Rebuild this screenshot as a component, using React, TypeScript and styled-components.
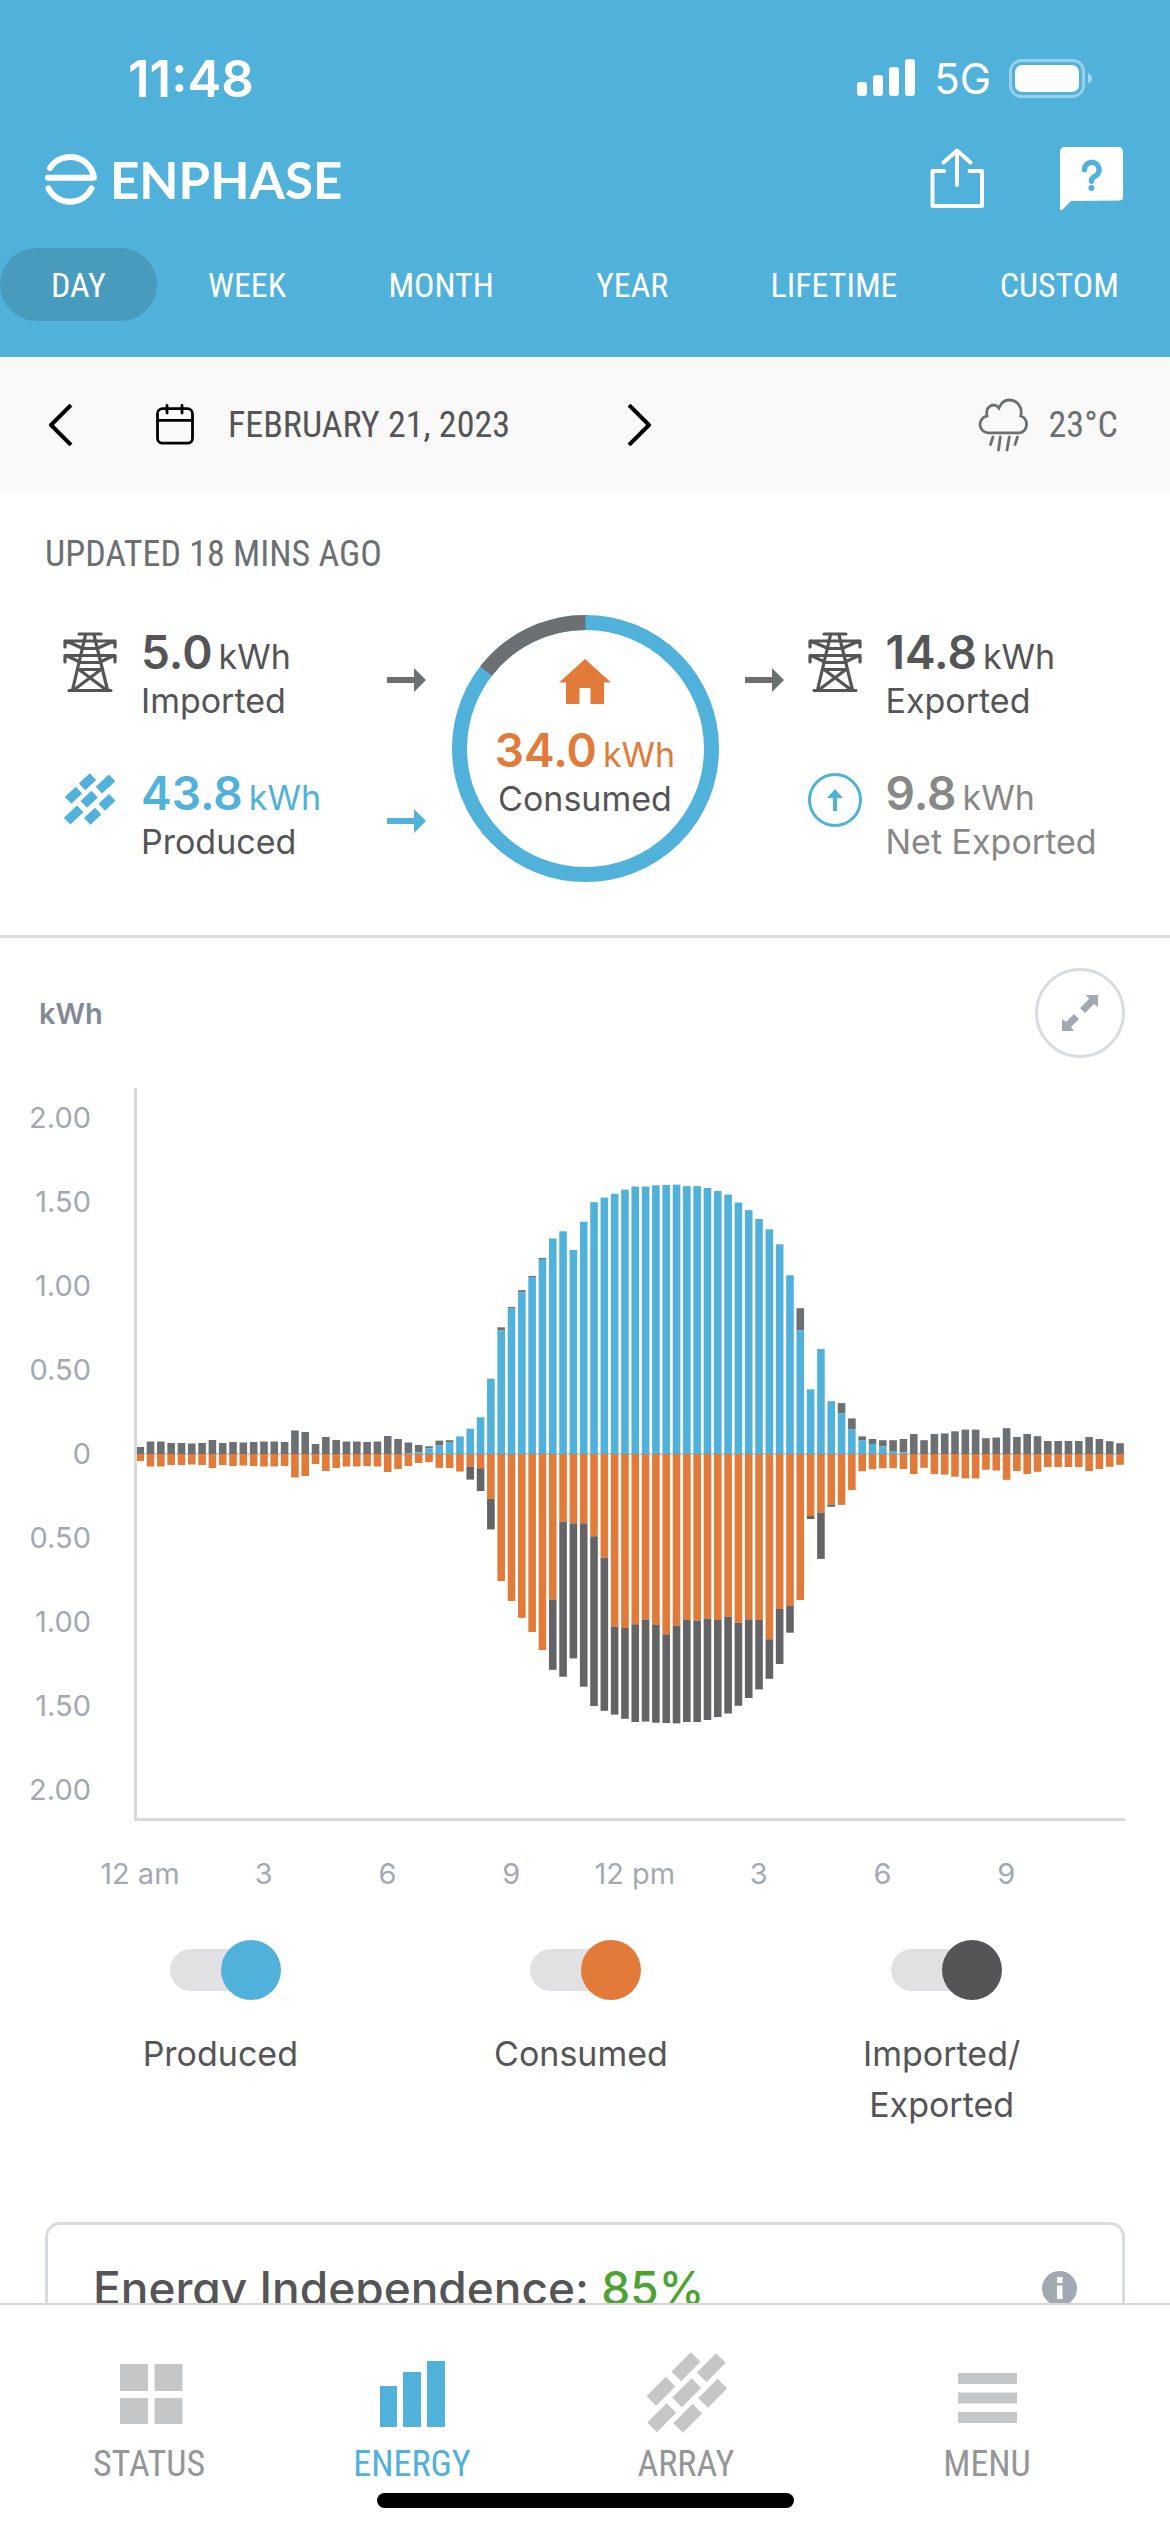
import React, { useState } from "react";
import styled, { createGlobalStyle } from "styled-components";

const color = {
  blue: "#50b1da",
  orange: "#e27a39",
  slate: "#6c7073",
  charcoal: "#555557",
  exported: "#646466",
  muted: "#888888",
  axis: "#a2a9b3",
  line: "#d8dce0",
  green: "#4fa335",
};

const sans = `Inter, "Liberation Sans", sans-serif`;
const narrow = `"Roboto Condensed", "Liberation Sans Narrow", Roboto, sans-serif`;

const GlobalStyle = createGlobalStyle`
  * { box-sizing: border-box; }
  body { margin: 0; background: #fff; font-family: ${sans}; }
  button { border: 0; padding: 0; background: none; font: inherit; color: inherit; cursor: pointer; }
  svg { display: block; flex: none; }
`;

const Screen = styled.div`
  display: flex;
  flex-direction: column;
  height: 100vh;
  color: ${color.charcoal};
`;

/* ---------- header ---------- */

const Header = styled.header`
  background: ${color.blue};
  color: #fff;
  padding-bottom: 36px;
`;

const StatusBar = styled.div`
  display: flex;
  align-items: center;
  justify-content: space-between;
  height: 132px;
  padding: 24px 78px 0 128px;
`;

const Clock = styled.time`
  font-size: 51px;
  font-weight: 600;
`;

const StatusIcons = styled.div`
  display: flex;
  align-items: center;
  gap: 18px;
  font-size: 42px;
`;

const BrandBar = styled.div`
  display: flex;
  align-items: center;
  justify-content: space-between;
  height: 94px;
  padding: 0 46px 0 45px;
`;

const Brand = styled.div`
  display: flex;
  align-items: center;
  gap: 13px;
  font-family: Lato, sans-serif;
  font-size: 51px;
  font-weight: 700;
`;

const BrandActions = styled.div`
  display: flex;
  align-items: center;
  gap: 74px;
`;

const Tabs = styled.nav`
  display: flex;
  justify-content: space-between;
  margin-top: 22px;
`;

const Tab = styled.button<{ $active: boolean }>`
  height: 73px;
  padding: 0 51px;
  border-radius: 37px;
  background: ${(p) => (p.$active ? "#489bbc" : "transparent")};
  font-family: ${narrow};
  font-size: 34px;
`;

/* ---------- date bar ---------- */

const DateBar = styled.div`
  display: flex;
  align-items: center;
  justify-content: space-between;
  height: 135px;
  padding: 0 52px 0 48px;
  background: #f9f9f9;
  font-family: ${narrow};
  font-size: 36px;
`;

const DateControls = styled.div`
  display: flex;
  align-items: center;
  gap: 83px;
`;

const DateButton = styled.button`
  display: flex;
  align-items: center;
  gap: 34px;
  min-width: 388px;
`;

const Weather = styled.div`
  display: flex;
  align-items: center;
  gap: 18px;
  color: ${color.slate};
`;

/* ---------- content ---------- */

const Content = styled.main`
  flex: 1;
  min-height: 0;
  overflow-y: auto;
  scrollbar-width: none;
`;

const Summary = styled.section`
  padding: 42px 45px 53px;
  border-bottom: 3px solid ${color.line};
`;

const Updated = styled.p`
  margin: 0;
  font-family: ${narrow};
  font-size: 36px;
  line-height: 40px;
  color: ${color.slate};
`;

const Flow = styled.div`
  display: grid;
  grid-template-columns: 1fr 267px 1fr;
  gap: 26px;
  margin-top: 41px;
`;

const FlowColumn = styled.div`
  display: flex;
  flex-direction: column;
  gap: 43px;
  padding-top: 12px;
`;

const FlowItem = styled.div<{ $indent?: boolean }>`
  display: flex;
  gap: 24px;
  padding-left: ${(p) => (p.$indent ? "18px" : "0")};
`;

const FlowIcon = styled.div`
  width: 54px;
  padding-top: 5px;
`;

const ArrowSlot = styled.div`
  display: flex;
  align-items: center;
  width: 39px;
  padding-top: 8px;
`;

const InArrow = styled(ArrowSlot)`
  margin-left: auto;
`;

const Value = styled.div<{ $color: string }>`
  height: 50px;
  font-size: 34px;
  line-height: 50px;
  white-space: nowrap;
  color: ${(p) => p.$color};

  strong {
    margin-right: 6px;
    font-size: 46px;
    font-weight: 600;
  }
`;

const Label = styled.div<{ $color?: string }>`
  font-size: 34px;
  line-height: 48px;
  white-space: nowrap;
  color: ${(p) => p.$color ?? color.charcoal};
`;

const Ring = styled.div`
  position: relative;
  height: 267px;
`;

const RingContent = styled.div`
  position: absolute;
  inset: 0;
  display: flex;
  flex-direction: column;
  align-items: center;
  padding-top: 44px;

  svg { margin-bottom: 21px; }
`;

const ChartHead = styled.div`
  display: flex;
  align-items: center;
  justify-content: space-between;
  padding: 30px 45px 0 39px;
  font-size: 29px;
  font-weight: 600;
  color: #818a96;
`;

const ExpandButton = styled.button`
  display: grid;
  place-items: center;
  width: 90px;
  height: 90px;
  border: 3px solid ${color.line};
  border-radius: 50%;
`;

const ChartRow = styled.div`
  display: flex;
  gap: 43px;
  margin-top: 18px;
  padding-right: 45px;
`;

const YAxis = styled.div`
  width: 91px;
  font-size: 29px;
  line-height: 84px;
  text-align: right;
  color: ${color.axis};
`;

const Plot = styled.div`
  flex: 1;
  padding-top: 12px;

  svg { width: 100%; height: 733px; }
`;

const XAxis = styled.div`
  display: flex;
  margin-top: 22px;
  padding: 0 102px 0 78px;
  font-size: 29px;
  line-height: 40px;
  text-align: center;
  color: ${color.axis};

  span { flex: 1; }
`;

const Legend = styled.div`
  display: grid;
  grid-template-columns: repeat(3, 1fr);
  margin-top: 46px;
  padding: 0 43px 0 45px;
`;

const LegendItem = styled.label`
  display: flex;
  flex-direction: column;
  align-items: center;
  gap: 28px;
  font-size: 34px;
  line-height: 51px;
  text-align: center;

  span { padding-right: 10px; white-space: pre-line; }
`;

const Switch = styled.input<{ $color: string }>`
  appearance: none;
  position: relative;
  width: 105px;
  height: 42px;
  margin: 9px 6px 9px 0;
  border-radius: 21px;
  background: #e1e1e3;

  &::after {
    content: "";
    position: absolute;
    top: -9px;
    left: -6px;
    width: 60px;
    height: 60px;
    border-radius: 50%;
    background: #b5b5b8;
  }

  &:checked::after {
    left: 51px;
    background: ${(p) => p.$color};
  }
`;

const Card = styled.section`
  display: flex;
  align-items: center;
  justify-content: space-between;
  margin: 92px 45px 60px;
  padding: 33px 45px 60px 45px;
  border: 3px solid ${color.line};
  border-radius: 15px;
`;

const CardTitle = styled.h2`
  margin: 0;
  font-size: 46px;
  font-weight: 500;
  line-height: 60px;

  span { color: ${color.green}; }
`;

/* ---------- bottom navigation ---------- */

const BottomNav = styled.nav`
  display: grid;
  grid-template-columns: 298fr 228fr 320fr 282fr;
  padding: 47px 42px 0 0;
  border-top: 2px solid #d6d6d7;
  background: #fff;
`;

const NavButton = styled.button<{ $active: boolean }>`
  display: flex;
  flex-direction: column;
  align-items: center;
  gap: 11px;
  font-family: ${narrow};
  font-size: 36px;
  line-height: 40px;
  color: ${(p) => (p.$active ? color.blue : "#949698")};

  svg { color: ${(p) => (p.$active ? color.blue : "#c5c6c8")}; }
`;

const HomeIndicator = styled.div`
  width: 417px;
  height: 15px;
  margin: 9px auto 24px;
  border-radius: 8px;
  background: #000;
`;

/* ---------- icons ---------- */

const Signal = () => (
  <svg width="59" height="38" fill="#fff">
    <rect x="0" y="23" width="10" height="14" rx="3" />
    <rect x="16" y="16" width="10" height="21" rx="3" />
    <rect x="32" y="8" width="10" height="29" rx="3" />
    <rect x="48" y="0" width="10" height="37" rx="3" />
  </svg>
);

const Battery = () => (
  <svg width="83" height="39">
    <rect x="1.5" y="1.5" width="73" height="36" rx="11" fill="none" stroke="#fff" strokeOpacity=".4" strokeWidth="3" />
    <rect x="6" y="6" width="64" height="27" rx="7" fill="#fff" />
    <path d="M79 14q4 2 4 5.500t-4 5.500z" fill="#fff" fillOpacity=".45" />
  </svg>
);

const Logo = () => (
  <svg width="52" height="54" viewBox="0 0 52 54" fill="none" stroke="#fff" strokeWidth="6" strokeLinecap="round" strokeLinejoin="round">
    <path d="M5 16A24 24 0 0 1 49 25.700H3" />
    <path d="M3.500 36.500A24 24 0 0 0 46.500 36.500" />
  </svg>
);

const ShareIcon = () => (
  <svg width="57" height="63" viewBox="0 0 57 63" fill="none" stroke="#fff" strokeWidth="4" strokeLinecap="round" strokeLinejoin="round">
    <path d="M15 23H3.500V58H53V23H40.500" />
    <path d="M28 3V37M14.500 14.500 28 2.500 41.500 14.500" />
  </svg>
);

const HelpIcon = () => (
  <svg width="64" height="64" viewBox="0 0 64 64">
    <path d="M5 0H58Q63 0 63 5V50Q63 53.500 59 53.500L11 54 1.500 63.500 0 63V5Q0 0 5 0Z" fill="#fff" />
    <path d="M24.500 22.800A7.300 7.300 0 1 1 35.500 29C32.500 30.500 31.500 31.500 31.500 34.300" fill="none" stroke={color.blue} strokeWidth="5.500" strokeLinecap="round" />
    <circle cx="31.400" cy="41" r="3" fill={color.blue} />
  </svg>
);

const Chevron = ({ right = false }: { right?: boolean }) => (
  <svg width="25" height="42" viewBox="0 0 25 42" fill="none" stroke="#000" strokeWidth="4" strokeLinejoin="round">
    <path d={right ? "M2 1 22 21 2 41" : "M23 1 3 21 23 41"} />
  </svg>
);

const CalendarIcon = () => (
  <svg width="38" height="41" viewBox="0 0 38 41" fill="none" stroke="#000" strokeWidth="2.800" strokeLinecap="round">
    <rect x="1.500" y="4.700" width="35" height="34.500" rx="5" />
    <path d="M2 16.300H36M11 1.500V9M26 1.500V9" />
  </svg>
);

const RainIcon = () => (
  <svg width="54" height="54" viewBox="0 0 54 54" fill="none" stroke="currentColor" strokeWidth="2.800" strokeLinecap="round">
    <path d="M10.500 34.800H43A8.800 8.800 0 0 0 43.700 18C46 9 40 2 32 2 27 2 24 5 22 10 17 4 8 8 10 18A8.500 8.500 0 0 0 10.500 34.800Z" />
    <path d="M16 39 13.500 46.500M23.300 39 21.500 52M32.300 39 30 52M40.500 39 38 46.500" />
  </svg>
);

const TowerIcon = () => (
  <svg width="54" height="61" viewBox="0 0 54 61" fill="none" stroke={color.charcoal} strokeWidth="3.200" strokeLinecap="round" strokeLinejoin="round">
    <path d="M16 2H38M22.500 3 9.500 58M31 3 44.500 58M6 58.500H48" />
    <path d="M2 15V9H52V15M3 9 20 16.500H34L51 9" />
    <path d="M2 30V23.500H52V30M3 23.500 18 30.500H36L51 23.500" />
    <path d="M16 37.500H38L12 57M16 37.500 42 57" />
  </svg>
);

type Panel = [cx: number, cy: number, length: number];

const Panels = ({ size, thickness, angle, items, fill }: { size: number; thickness: number; angle: number; items: Panel[]; fill: string }) => (
  <svg width={size} height={size} viewBox={`0 0 ${size} ${size}`} fill={fill}>
    {items.map(([cx, cy, length]) => (
      <rect
        key={`${cx}-${cy}`}
        x={cx - length / 2}
        y={cy - thickness / 2}
        width={length}
        height={thickness}
        transform={`rotate(${angle} ${cx} ${cy})`}
      />
    ))}
  </svg>
);

const PanelsIcon = () => (
  <Panels
    size={54}
    thickness={9.4}
    angle={-43}
    fill={color.blue}
    items={[[24.5, 8.7, 15], [42.5, 11, 18], [10.5, 22.3, 15], [26.2, 26.3, 15], [44, 29.3, 14.5], [10.7, 42, 18], [29.7, 43.3, 15]]}
  />
);

const ArrayIcon = () => (
  <Panels
    size={81}
    thickness={13.6}
    angle={-45}
    fill="currentColor"
    items={[[40, 14.7, 27.3], [65.3, 15.7, 27.3], [15, 39.3, 27.3], [40.7, 40.7, 27.3], [66.7, 41.3, 27.3], [15.7, 65.7, 27.3], [41.7, 66.3, 27.3]]}
  />
);

const Arrow = ({ fill = color.slate }: { fill?: string }) => (
  <svg width="39" height="24" viewBox="0 0 39 24" fill={fill}>
    <path d="M0 9H27V0L39 12 27 24V15H0Z" />
  </svg>
);

const NetIcon = () => (
  <svg width="54" height="54" viewBox="0 0 54 54">
    <circle cx="27" cy="27" r="25.500" fill="none" stroke={color.blue} strokeWidth="3" />
    <path d="M27 16 35 25H29V38H25V25H19Z" fill={color.blue} />
  </svg>
);

const HouseIcon = () => (
  <svg width="52" height="45" viewBox="0 0 52 45" fill={color.orange}>
    <path d="M26 0 52 23.500H45V45H31.500V29H20.500V45H7V23.500H0Z" />
  </svg>
);

const RING_RADIUS = 126;
const IMPORTED_SHARE = 0.145;

const RingChart = () => {
  const length = 2 * Math.PI * RING_RADIUS;
  return (
    <svg width="267" height="267" viewBox="0 0 267 267" fill="none" strokeWidth="15">
      <circle cx="133.500" cy="133.500" r={RING_RADIUS} stroke={color.blue} />
      <circle
        cx="133.500"
        cy="133.500"
        r={RING_RADIUS}
        stroke={color.slate}
        strokeDasharray={`${length * IMPORTED_SHARE} ${length}`}
        strokeDashoffset={length * IMPORTED_SHARE - length}
        transform="rotate(-90 133.5 133.5)"
      />
    </svg>
  );
};

const ExpandIcon = () => (
  <svg width="38" height="38" viewBox="0 0 38 38" fill={color.axis}>
    <path d="M25 1H37V13L33 10 24 19 19 14 28 5Z" />
    <path d="M13 37H1V25L5 28 13 20 18 25 10 33Z" />
  </svg>
);

const InfoIcon = () => (
  <svg width="35" height="35" viewBox="0 0 35 35">
    <circle cx="17.500" cy="17.500" r="17.500" fill={color.axis} />
    <path d="M15 6H20.500V12H15ZM15 14.500H20.500V28H15Z" fill="#fff" />
  </svg>
);

const StatusIcon = () => (
  <svg width="81" height="81" fill="currentColor">
    <path d="M11 12h28v27H11zM45.500 12h28v27h-28zM11 46h28v26H11zM45.500 46h28v26h-28z" />
  </svg>
);

const EnergyIcon = () => (
  <svg width="81" height="81" fill="currentColor">
    <path d="M8 34h17v41H8zM31 20h18v55H31zM55 9h18v66H55z" />
  </svg>
);

const MenuIcon = () => (
  <svg width="81" height="81" fill="currentColor">
    <path d="M11 21h59v11H11zM11 40.500h59v11H11zM11 60h59v11H11z" />
  </svg>
);

/* ---------- energy data ---------- */

/*
 * One tuple per 15 minutes, in units of 1/168 kWh:
 * [produced, produced + imported, consumed, consumed + exported]
 */
type Reading = [number, number, number, number];

const idle = (values: number[]): Reading[] => values.map((v) => [0, v, v, v]);

const readings: Reading[] = [
  ...idle([7, 12.5, 12.5, 11, 11, 10.5, 11, 14, 11, 12, 11.5, 12, 12.5, 12.5, 12, 23.5, 22, 10, 17, 14, 12.5, 12.5, 12, 12.5, 18, 15]),
  [1, 11.5, 12, 12], [1.5, 9, 9, 9], [5.7, 7.7, 8, 8], [8.4, 13.4, 13.8, 13.8], [11.9, 13.8, 14, 14],
  [17.6, 17.6, 17.6, 17.6], [25.3, 25.3, 12.6, 25.6], [36.7, 36.7, 14.2, 37], [75.4, 75.4, 44.8, 75.4],
  [123.6, 126.7, 127, 127], [145.8, 147, 147, 147], [161.5, 163.8, 163.8, 163.8], [177, 178, 178, 178],
  [195, 196, 196, 196], [215.5, 215.5, 145.8, 215.8], [222.7, 222.7, 67.7, 222.7], [204, 204, 69.3, 204.4],
  [232.3, 232.3, 69.3, 232.7], [251.8, 251.8, 82.3, 252], [256.4, 256.4, 103.7, 256.8], [260.2, 260.2, 172.6, 260.6],
  [264.4, 264.4, 174, 264.8], [267.5, 267.5, 170.3, 268], [267.5, 267.5, 165.7, 267.5], [268.7, 268.7, 171, 268.7],
  [269, 269, 180.3, 269], [269.4, 269.4, 171.8, 269.4], [267.9, 267.9, 166, 268], [267.9, 267.9, 166.5, 268],
  [266, 266, 164.6, 266], [263, 263, 166, 263], [259.5, 259.5, 162.7, 259.5], [251.4, 251.4, 168.8, 251.8],
  [243.8, 243.8, 165.3, 244], [235, 235, 166, 235.4], [224.6, 224.6, 185.2, 224.8], [209.7, 209.7, 155, 210],
  [178.7, 178.7, 152, 178.7], [123.6, 145.8, 146, 146], [64.7, 64.7, 62, 65], [104.9, 104.9, 58.6, 104.9],
  [52.8, 52.8, 50.5, 52.8], [40.6, 50.9, 50.9, 50.9], [24.5, 35.6, 36, 36], [13.8, 17.6, 17.2, 17.2],
  [10, 15, 15.3, 15.3], [7.7, 13.8, 14.2, 14.2], [2.3, 13.8, 14.2, 14.2], [1.5, 15, 15, 15],
  ...idle([20, 13.8, 20, 20.6, 22.7, 24.4, 24.4, 15.8, 16.5, 25.8, 17, 20, 17.8, 13, 13, 13, 13, 17, 15, 12.8, 10.8]),
];

const ZERO_Y = 366;
const PITCH = 10.314;
const BAR_WIDTH = 7.6;

type Visible = { produced: boolean; consumed: boolean; grid: boolean };

const EnergyChart = ({ visible }: { visible: Visible }) => (
  <svg viewBox="0 0 991 733" preserveAspectRatio="none" role="img" aria-label="Energy by quarter hour">
    <path d={`M0 ${ZERO_Y}H991`} stroke="#cfd3d7" strokeWidth="2" />
    {readings.map(([produced, up, consumed, down], i) => {
      const x = 6.2 + i * PITCH - BAR_WIDTH / 2;
      return (
        <g key={i}>
          {visible.grid && <rect x={x} y={ZERO_Y - up} width={BAR_WIDTH} height={up - produced} fill={color.slate} />}
          {visible.produced && <rect x={x} y={ZERO_Y - produced} width={BAR_WIDTH} height={produced} fill={color.blue} />}
          {visible.consumed && <rect x={x} y={ZERO_Y} width={BAR_WIDTH} height={consumed} fill={color.orange} />}
          {visible.grid && <rect x={x} y={ZERO_Y + consumed} width={BAR_WIDTH} height={down - consumed} fill={color.exported} />}
        </g>
      );
    })}
    <path d="M1.500 0V731.500H991" fill="none" stroke="#d6d9dc" strokeWidth="3" />
  </svg>
);

const TABS = ["DAY", "WEEK", "MONTH", "YEAR", "LIFETIME", "CUSTOM"];
const Y_LABELS = ["2.00", "1.50", "1.00", "0.50", "0", "0.50", "1.00", "1.50", "2.00"];
const X_LABELS = ["12 am", "3", "6", "9", "12 pm", "3", "6", "9"];
const NAV = [
  { name: "STATUS", Icon: StatusIcon },
  { name: "ENERGY", Icon: EnergyIcon },
  { name: "ARRAY", Icon: ArrayIcon },
  { name: "MENU", Icon: MenuIcon },
];
const LEGEND: { key: keyof Visible; text: string; fill: string }[] = [
  { key: "produced", text: "Produced", fill: color.blue },
  { key: "consumed", text: "Consumed", fill: color.orange },
  { key: "grid", text: "Imported/\nExported", fill: color.charcoal },
];

export default function App() {
  const [tab, setTab] = useState("DAY");
  const [page, setPage] = useState("ENERGY");
  const [visible, setVisible] = useState<Visible>({ produced: true, consumed: true, grid: true });

  return (
    <Screen>
      <GlobalStyle />
      <Header>
        <StatusBar>
          <Clock>11:48</Clock>
          <StatusIcons>
            <Signal />
            5G
            <Battery />
          </StatusIcons>
        </StatusBar>
        <BrandBar>
          <Brand>
            <Logo />
            ENPHASE
          </Brand>
          <BrandActions>
            <button aria-label="Share"><ShareIcon /></button>
            <button aria-label="Help"><HelpIcon /></button>
          </BrandActions>
        </BrandBar>
        <Tabs>
          {TABS.map((name) => (
            <Tab key={name} $active={name === tab} onClick={() => setTab(name)}>{name}</Tab>
          ))}
        </Tabs>
      </Header>

      <DateBar>
        <DateControls>
          <button aria-label="Previous day"><Chevron /></button>
          <DateButton>
            <CalendarIcon />
            FEBRUARY 21, 2023
          </DateButton>
          <button aria-label="Next day"><Chevron right /></button>
        </DateControls>
        <Weather>
          <RainIcon />
          23°C
        </Weather>
      </DateBar>

      <Content>
        <Summary>
          <Updated>UPDATED 18 MINS AGO</Updated>
          <Flow>
            <FlowColumn>
              <FlowItem $indent>
                <FlowIcon><TowerIcon /></FlowIcon>
                <div>
                  <Value $color={color.charcoal}><strong>5.0</strong>kWh</Value>
                  <Label>Imported</Label>
                </div>
                <InArrow><Arrow /></InArrow>
              </FlowItem>
              <FlowItem $indent>
                <FlowIcon><PanelsIcon /></FlowIcon>
                <div>
                  <Value $color={color.blue}><strong>43.8</strong>kWh</Value>
                  <Label>Produced</Label>
                </div>
                <InArrow><Arrow fill={color.blue} /></InArrow>
              </FlowItem>
            </FlowColumn>
            <Ring>
              <RingChart />
              <RingContent>
                <HouseIcon />
                <Value $color={color.orange}><strong>34.0</strong>kWh</Value>
                <Label>Consumed</Label>
              </RingContent>
            </Ring>
            <FlowColumn>
              <FlowItem>
                <ArrowSlot><Arrow /></ArrowSlot>
                <FlowIcon><TowerIcon /></FlowIcon>
                <div>
                  <Value $color={color.charcoal}><strong>14.8</strong>kWh</Value>
                  <Label>Exported</Label>
                </div>
              </FlowItem>
              <FlowItem>
                <ArrowSlot />
                <FlowIcon><NetIcon /></FlowIcon>
                <div>
                  <Value $color={color.muted}><strong>9.8</strong>kWh</Value>
                  <Label $color={color.muted}>Net Exported</Label>
                </div>
              </FlowItem>
            </FlowColumn>
          </Flow>
        </Summary>

        <ChartHead>
          kWh
          <ExpandButton aria-label="Expand chart"><ExpandIcon /></ExpandButton>
        </ChartHead>
        <ChartRow>
          <YAxis>{Y_LABELS.map((text, i) => <div key={i}>{text}</div>)}</YAxis>
          <Plot><EnergyChart visible={visible} /></Plot>
        </ChartRow>
        <XAxis>{X_LABELS.map((text, i) => <span key={i}>{text}</span>)}</XAxis>

        <Legend>
          {LEGEND.map(({ key, text, fill }) => (
            <LegendItem key={key}>
              <Switch
                type="checkbox"
                $color={fill}
                checked={visible[key]}
                onChange={() => setVisible({ ...visible, [key]: !visible[key] })}
              />
              <span>{text}</span>
            </LegendItem>
          ))}
        </Legend>

        <Card>
          <CardTitle>Energy Independence: <span>85%</span></CardTitle>
          <button aria-label="About energy independence"><InfoIcon /></button>
        </Card>
      </Content>

      <BottomNav>
        {NAV.map(({ name, Icon }) => (
          <NavButton key={name} $active={name === page} onClick={() => setPage(name)}>
            <Icon />
            {name}
          </NavButton>
        ))}
      </BottomNav>
      <HomeIndicator />
    </Screen>
  );
}
